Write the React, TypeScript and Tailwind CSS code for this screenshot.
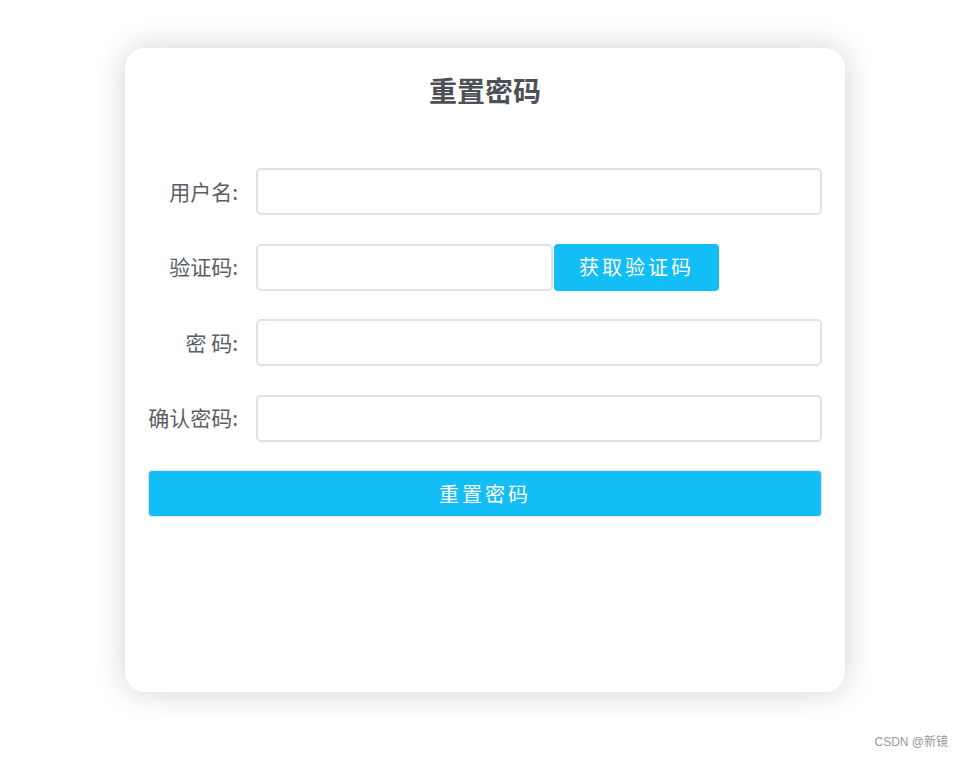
import React, { useState } from 'react';

const FONT = { fontFamily: '"Microsoft YaHei", "Noto Sans CJK SC", "Noto Sans", sans-serif' };

interface FieldProps {
  label: string;
  type?: string;
  value: string;
  onChange: (v: string) => void;
  children?: React.ReactNode;
  short?: boolean;
}

const Field: React.FC<FieldProps> = ({ label, type = 'text', value, onChange, children, short }) => (
  <div className="flex items-center h-[47px]">
    <label className="w-[90px] text-right text-[21px] text-[#5a5e66] whitespace-pre shrink-0 mr-[18px]">{label}</label>
    <input
      type={type}
      value={value}
      onChange={(e) => onChange(e.target.value)}
      className={`${short ? 'w-[297px]' : 'flex-1'} h-[47px] border-2 border-[#e0e2ea] rounded-[5px] px-3 text-[16px] outline-none focus:border-[#13bdf5]`}
    />
    {children}
  </div>
);

export default function App() {
  const [username, setUsername] = useState('');
  const [code, setCode] = useState('');
  const [password, setPassword] = useState('');
  const [confirm, setConfirm] = useState('');

  return (
    <div className="w-[963px] h-[759px] bg-white relative overflow-hidden" style={FONT}>
      <div className="pt-[48px] pl-[125px]">
        <div className="w-[720px] h-[644px] bg-white rounded-[20px] shadow-[0_0_32px_rgba(0,0,0,0.18)] px-[23px]">
          <h1 className="text-center text-[28px] font-bold text-[#4d5157] pt-[22px] leading-[40px]">重置密码</h1>
          <form className="mt-[58px] flex flex-col gap-[28.5px]" onSubmit={(e) => e.preventDefault()}>
            <Field label="用户名:" value={username} onChange={setUsername} />
            <Field label="验证码:" value={code} onChange={setCode} short>
              <button
                type="button"
                className="ml-[1px] w-[165px] h-[47px] bg-[#13bdf5] text-white text-[20px] tracking-[3px] rounded-[4px]"
              >
                获取验证码
              </button>
            </Field>
            <Field label="密 码:" type="password" value={password} onChange={setPassword} />
            <Field label="确认密码:" type="password" value={confirm} onChange={setConfirm} />
            <button
              type="submit"
              className="h-[47px] w-full bg-[#13bdf5] border border-[#e3e6eb] text-white text-[20px] tracking-[3px] rounded-[4px]"
            >
              重置密码
            </button>
          </form>
        </div>
      </div>
      <div className="absolute right-[15px] bottom-[8px] text-[12px] text-[#999]" style={{ fontFamily: '"Liberation Sans", "Noto Sans CJK SC", sans-serif' }}>
        CSDN @新镜
      </div>
    </div>
  );
}
